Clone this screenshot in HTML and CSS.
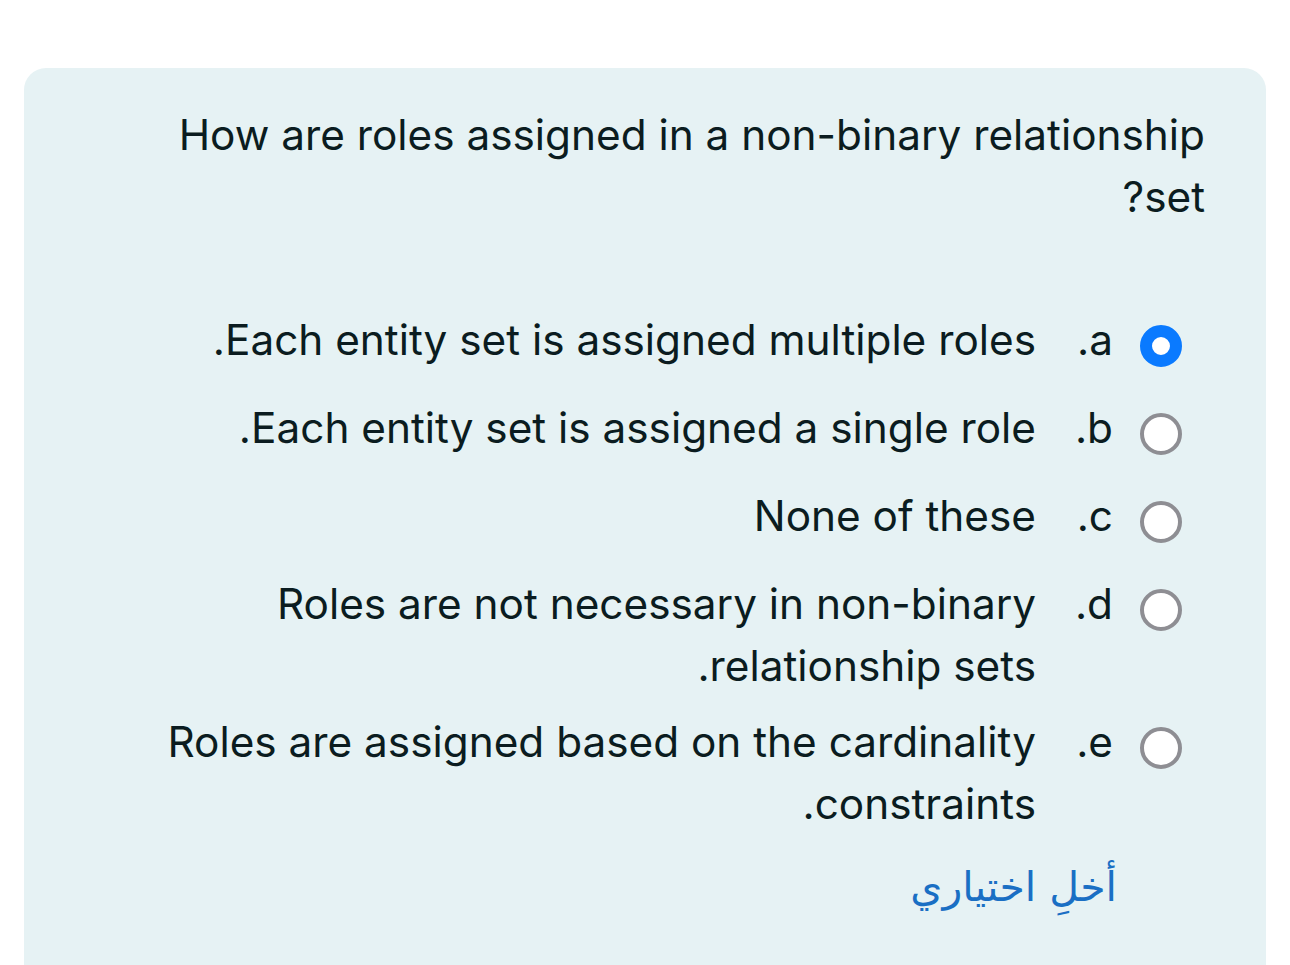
FILE: index.html
```html
<!DOCTYPE html>
<html lang="ar" dir="rtl">
<head>
<meta charset="utf-8">
<link rel="stylesheet" href="styles.css">
</head>
<body>
<div class="card">
  <div class="question">How are roles assigned in a non-binary relationship set?</div>
  <div class="answers">
    <div class="option">
      <span class="radio checked"></span>
      <span class="label">a.</span>
      <span class="text">Each entity set is assigned multiple roles.</span>
    </div>
    <div class="option">
      <span class="radio"></span>
      <span class="label">b.</span>
      <span class="text">Each entity set is assigned a single role.</span>
    </div>
    <div class="option">
      <span class="radio"></span>
      <span class="label">c.</span>
      <span class="text">None of these</span>
    </div>
    <div class="option">
      <span class="radio"></span>
      <span class="label">d.</span>
      <span class="text">Roles are not necessary in non-binary relationship sets.</span>
    </div>
    <div class="option">
      <span class="radio"></span>
      <span class="label">e.</span>
      <span class="text">Roles are assigned based on the cardinality constraints.</span>
    </div>
  </div>
  <a class="clear" href="#">أخلِ اختياري</a>
</div>
</body>
</html>
```

FILE: styles.css
```css
html, body {
  margin: 0;
  padding: 0;
  background: #ffffff;
}
body {
  font-family: Inter, "Liberation Sans", sans-serif;
  color: #0b1c20;
}
.card {
  box-sizing: border-box;
  margin: 68px 24px 0 24px;
  background: #e6f2f4;
  border-radius: 22px 22px 0 0;
  padding: 36px 61px 30px 120px;
  min-height: calc(100vh - 68px);
}
.question {
  font-size: 42.3px;
  line-height: 62px;
}
.answers {
  margin-top: 81px;
  padding-right: 23px;
}
.option {
  display: flex;
  align-items: flex-start;
  min-height: 88px;
}
.radio {
  flex: none;
  width: 42px;
  height: 42px;
  box-sizing: border-box;
  border: 4px solid #8e8e93;
  border-radius: 50%;
  background: #ffffff;
  margin-top: 16px;
}
.radio.checked {
  border: 12px solid #0a7aff;
}
.label {
  flex: none;
  width: 77px;
  margin-right: 27px;
  font-size: 42.3px;
  line-height: 62px;
}
.text {
  flex: 1;
  font-size: 42.3px;
  line-height: 62px;
  padding-bottom: 14px;
}
.clear {
  display: block;
  margin: 7px 88px 0 0;
  font-family: "DejaVu Sans", sans-serif;
  font-size: 41px;
  line-height: 62px;
  color: #1a6fc4;
  text-decoration: none;
}
```
